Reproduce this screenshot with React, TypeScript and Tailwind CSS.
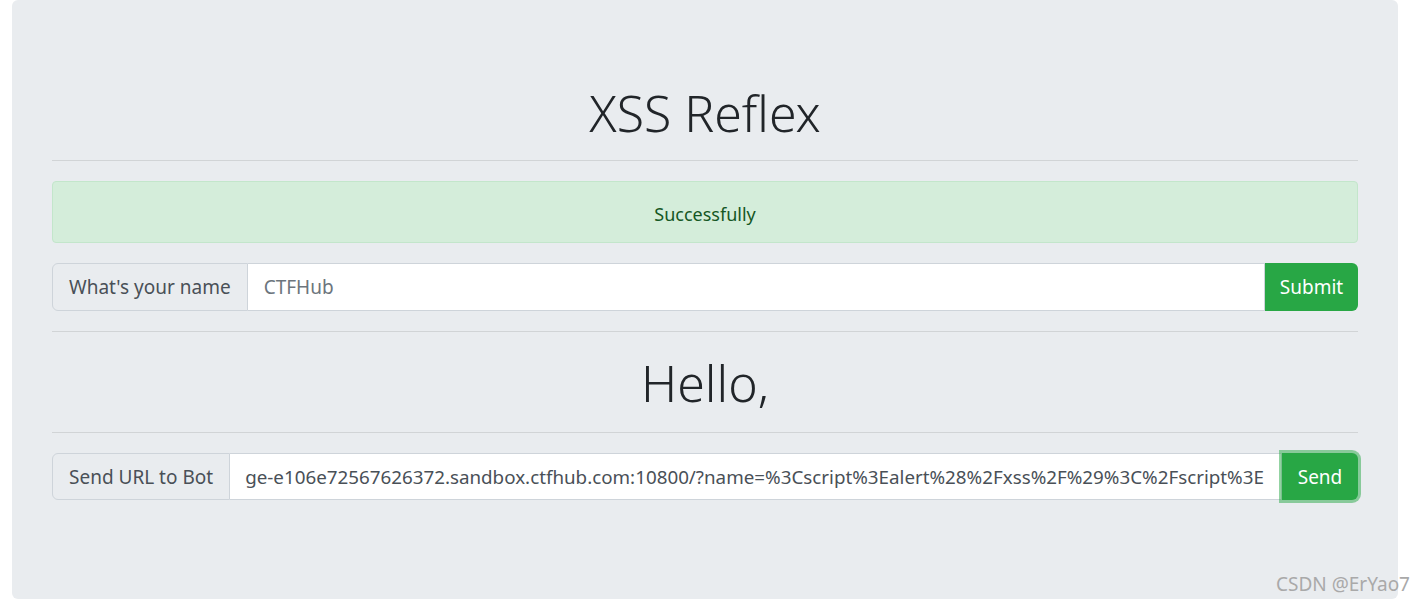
import React from 'react';

const URL_VISIBLE =
  'ge-e106e72567626372.sandbox.ctfhub.com:10800/?name=%3Cscript%3Ealert%28%2Fxss%2F%29%3C%2Fscript%3E';

const App: React.FC = () => {
  return (
    <div className="min-h-[603px] bg-white font-['Noto_Sans','Liberation_Sans',sans-serif] text-[#212529]">
      <div className="relative mx-3 h-[599px] w-[1386px] rounded-md bg-[#e9ecef] px-10 pt-[80px]">
        {/* Titre */}
        <h1 className="text-center text-[50px] font-light leading-[67px]">XSS Reflex</h1>
        <hr className="mt-[13px] border-t border-black/10" />

        {/* Alerte */}
        <div className="mt-5 flex h-[62px] items-center justify-center rounded border border-[#c3e6cb] bg-[#d4edda] pt-1 text-lg text-[#155724]">
          Successfully
        </div>

        {/* Formulaire nom */}
        <div className="mt-5 flex h-12 text-[19px]">
          <div className="flex items-center rounded-l-md border border-[#ced4da] bg-[#e9ecef] px-4 pt-px text-[#495057]">
            What's your name
          </div>
          <div className="flex flex-1 items-center border border-l-0 border-[#ced4da] bg-white px-4 pt-px text-[#6c757d]">
            CTFHub
          </div>
          <button className="flex w-[93px] items-center justify-center rounded-r-md bg-[#28a745] pt-px text-white">
            Submit
          </button>
        </div>

        <hr className="mt-5 border-t border-black/10" />

        <h1 className="mt-[18px] text-center text-[50px] font-light leading-[67px]">Hello,</h1>
        <hr className="mt-[15px] border-t border-black/10" />

        {/* Envoi au bot */}
        <div className="mt-5 flex h-[47px] text-[19px]">
          <div className="flex items-center rounded-l-md border border-[#ced4da] bg-[#e9ecef] px-4 pt-px text-[#495057]">
            Send URL to Bot
          </div>
          <div className="flex min-w-0 flex-1 items-center overflow-hidden whitespace-nowrap border border-l-0 border-[#ced4da] bg-white px-[15px] pt-px text-[18.8px] text-[#495057]">
            {URL_VISIBLE}
          </div>
          <button className="relative z-10 flex w-[76px] items-center justify-center rounded-r-md bg-[#28a745] pt-px text-white shadow-[0_0_0_3px_rgba(40,167,69,0.5)]">
            Send
          </button>
        </div>

        {/* Filigrane */}
        <div className="absolute bottom-[5px] right-[-12px] text-[19px] leading-none text-[#a9a9a9]">
          CSDN @ErYao7
        </div>
      </div>
    </div>
  );
};

export default App;
